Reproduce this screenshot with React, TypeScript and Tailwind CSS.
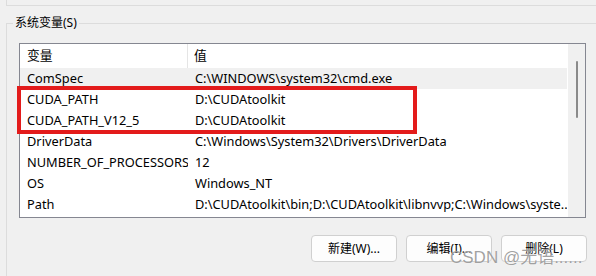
const rows = [
  { name: "ComSpec", value: "C:\\WINDOWS\\system32\\cmd.exe", hot: true },
  { name: "CUDA_PATH", value: "D:\\CUDAtoolkit" },
  { name: "CUDA_PATH_V12_5", value: "D:\\CUDAtoolkit" },
  { name: "DriverData", value: "C:\\Windows\\System32\\Drivers\\DriverData" },
  { name: "NUMBER_OF_PROCESSORS", value: "12" },
  { name: "OS", value: "Windows_NT" },
  { name: "Path", value: "D:\\CUDAtoolkit\\bin;D:\\CUDAtoolkit\\libnvvp;C:\\Windows\\syste..." },
];

const font = { fontFamily: '"Noto Sans", "Noto Sans CJK SC", sans-serif' };

export default function App() {
  return (
    <div
      className="relative w-[596px] h-[276px] overflow-hidden bg-[#f0f0f0] text-black"
      style={font}
    >
      {/* bottom edge of the user variables group */}
      <div className="ml-[6px] w-[620px] h-[6px] border-l border-b border-[#dcdcdc]" />

      <fieldset className="mt-[9px] ml-[6px] w-[620px] h-[300px] border border-[#dcdcdc]">
        <legend className="ml-[6px] px-[2px] text-[12px] leading-[16px]">系统变量(S)</legend>

        <div className="mt-[12px] ml-[12px] w-[567px] h-[175px] border border-[#858791] bg-white flex">
          <div className="w-[547px] text-[12.8px]">
            <div className="flex h-[24px] items-center">
              <div className="w-[168px] h-full pl-[7px] flex items-center border-r border-[#e5e5e5]">变量</div>
              <div className="pl-[6px]">值</div>
            </div>
            {rows.map((r) => (
              <div
                key={r.name}
                className={`flex h-[21px] items-center whitespace-nowrap ${r.hot ? "bg-[#f0f0f0]" : ""}`}
              >
                <div className="w-[168px] pl-[7px] overflow-hidden">{r.name}</div>
                <div className="flex-1 pl-[7px] overflow-hidden">{r.value}</div>
              </div>
            ))}
          </div>
          <div className="ml-[1px] w-[17px] bg-[#f0f0f0] flex justify-center pt-[17px]">
            <div className="w-[2px] h-[57px] rounded-full bg-[#8a8a8a]" />
          </div>
        </div>

        <div className="mt-[17px] ml-[304px] flex gap-[9px]">
          {["新建(W)...", "编辑(I)...", "删除(L)"].map((b) => (
            <button
              key={b}
              className="w-[86px] h-[27px] rounded-[4px] border border-[#d0d0d0] bg-[#fdfdfd] text-[12px]"
            >
              {b}
            </button>
          ))}
        </div>
      </fieldset>

      {/* highlight box */}
      <div className="absolute left-[17px] top-[86px] w-[400px] h-[48px] border-4 border-[#e31b1b]" />

      {/* watermark */}
      <div
        className="absolute left-[450px] top-[247px] text-[17px] leading-[22px] text-[rgba(120,120,120,0.7)] whitespace-nowrap"
        style={{ fontFamily: '"Liberation Sans", "Noto Sans CJK SC", sans-serif', textShadow: "0 0 1px rgba(255,255,255,0.9)" }}
      >
        CSDN @无语......
      </div>
    </div>
  );
}
